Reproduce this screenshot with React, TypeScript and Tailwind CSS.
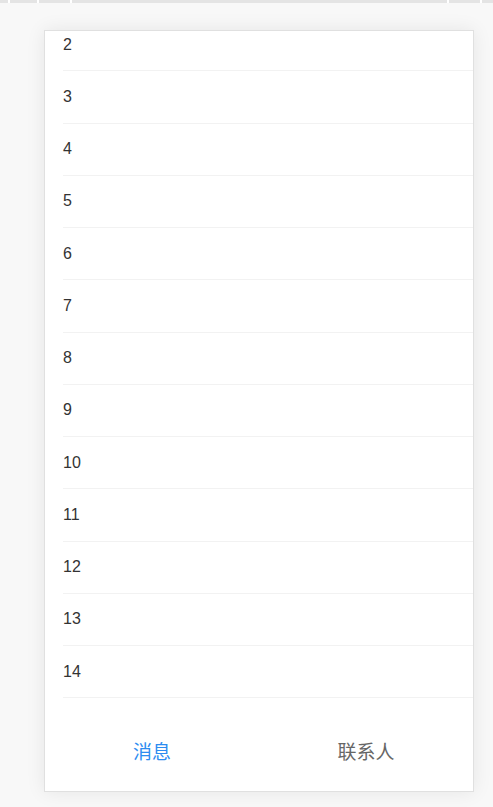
const rows = [2, 3, 4, 5, 6, 7, 8, 9, 10, 11, 12, 13, 14];
const ticks = [8, 37, 70, 447, 480];

export default function App() {
  return (
    <div className="relative h-[807px] w-[493px] overflow-hidden bg-[#f8f8f8] font-['Liberation_Sans','Noto_Sans_CJK_SC',sans-serif]">
      <div className="relative h-[3px] w-full bg-[#e4e4e4]">
        {ticks.map((x) => (
          <span key={x} className="absolute top-0 h-[3px] w-[2px] bg-white" style={{ left: x }} />
        ))}
      </div>
      <div className="ml-[44px] mt-[27px] flex h-[762px] w-[430px] flex-col border border-[#e0e0e0] bg-white shadow-[0_0_18px_rgba(0,0,0,0.08)]">
        <div className="h-[683px] overflow-hidden">
          <div className="-mt-[12px]">
            {rows.map((n) => (
              <div key={n} className="ml-[18px] flex h-[52.25px] items-center border-b border-[#f2f2f2] text-[16px] text-[#333]">
                {n}
              </div>
            ))}
          </div>
        </div>
        <div className="flex h-[78px] items-center pt-[3px] text-[19px]">
          <div className="flex flex-1 justify-center text-[#2d8cf0]">消息</div>
          <div className="flex flex-1 justify-center text-[#666]">联系人</div>
        </div>
      </div>
    </div>
  );
}
